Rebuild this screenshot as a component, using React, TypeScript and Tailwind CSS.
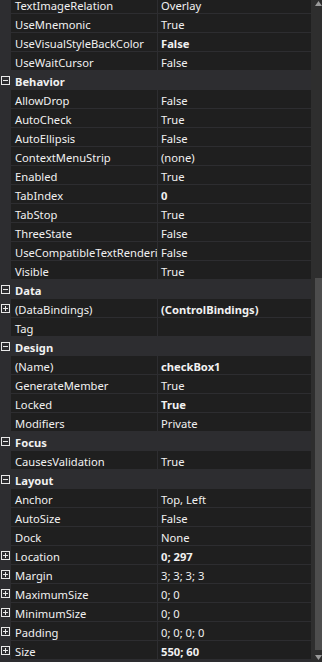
type Row =
  | { cat: string }
  | { name: string; value: string; bold?: boolean; plus?: boolean };

const rows: Row[] = [
  { name: "TextImageRelation", value: "Overlay" },
  { name: "UseMnemonic", value: "True" },
  { name: "UseVisualStyleBackColor", value: "False", bold: true },
  { name: "UseWaitCursor", value: "False" },
  { cat: "Behavior" },
  { name: "AllowDrop", value: "False" },
  { name: "AutoCheck", value: "True" },
  { name: "AutoEllipsis", value: "False" },
  { name: "ContextMenuStrip", value: "(none)" },
  { name: "Enabled", value: "True" },
  { name: "TabIndex", value: "0", bold: true },
  { name: "TabStop", value: "True" },
  { name: "ThreeState", value: "False" },
  { name: "UseCompatibleTextRendering", value: "False" },
  { name: "Visible", value: "True" },
  { cat: "Data" },
  { name: "(DataBindings)", value: "(ControlBindings)", bold: true, plus: true },
  { name: "Tag", value: "" },
  { cat: "Design" },
  { name: "(Name)", value: "checkBox1", bold: true },
  { name: "GenerateMember", value: "True" },
  { name: "Locked", value: "True", bold: true },
  { name: "Modifiers", value: "Private" },
  { cat: "Focus" },
  { name: "CausesValidation", value: "True" },
  { cat: "Layout" },
  { name: "Anchor", value: "Top, Left" },
  { name: "AutoSize", value: "False" },
  { name: "Dock", value: "None" },
  { name: "Location", value: "0; 297", bold: true, plus: true },
  { name: "Margin", value: "3; 3; 3; 3", plus: true },
  { name: "MaximumSize", value: "0; 0", plus: true },
  { name: "MinimumSize", value: "0; 0", plus: true },
  { name: "Padding", value: "0; 0; 0; 0", plus: true },
  { name: "Size", value: "550; 60", bold: true, plus: true },
];

function Expander({ open }: { open: boolean }) {
  return (
    <svg width="9" height="9" viewBox="0 0 9 9" className="shrink-0">
      <rect x="0.5" y="0.5" width="8" height="8" fill="none" stroke="#e8e8e8" />
      <line x1="2" y1="4.5" x2="7" y2="4.5" stroke="#e8e8e8" />
      {!open && <line x1="4.5" y1="2" x2="4.5" y2="7" stroke="#e8e8e8" />}
    </svg>
  );
}

export default function App() {
  return (
    <div className="w-[322px] h-[662px] overflow-hidden bg-[#2d2d30] flex font-['Noto_Sans',sans-serif] text-[11.2px] text-[#f1f1f1]">
      <div className="w-[311px] flex flex-col -mt-[5px]">
        {rows.map((r, i) =>
          "cat" in r ? (
            <div key={i} className="h-[19px] flex items-center bg-[#2d2d30]">
              <div className="w-[11px] flex items-center pl-[1px]">
                <Expander open />
              </div>
              <span className="pl-[4px] pt-[3px] font-bold leading-none">{r.cat}</span>
            </div>
          ) : (
            <div key={i} className="h-[19px] flex">
              <div className="w-[11px] flex items-center pl-[1px]">
                {r.plus && <Expander open={false} />}
              </div>
              <div className="w-[146px] h-[18px] bg-[#1f1f1f] flex items-center pl-[4px] pt-[3px] overflow-hidden whitespace-nowrap">
                <span className="leading-none">{r.name}</span>
              </div>
              <div className="w-[1px]" />
              <div
                className={`flex-1 h-[18px] bg-[#1f1f1f] flex items-center pl-[3px] pt-[3px] whitespace-nowrap ${
                  r.bold ? "font-bold" : ""
                }`}
              >
                <span className="leading-none">{r.value}</span>
              </div>
            </div>
          )
        )}
      </div>
      <div className="flex-1 flex flex-col bg-[#2e2e2e] pl-[4px]">
        <div className="h-[8px] flex items-start pt-[1px]">
          <svg width="7" height="5" viewBox="0 0 7 5">
            <polygon points="3.5,0 7,5 0,5" fill="#9a9a9a" />
          </svg>
        </div>
        <div className="h-[270px]" />
        <div className="flex-1 bg-[#4d4d4d]" />
        <div className="h-[12px] flex items-end pb-[2px]">
          <svg width="7" height="5" viewBox="0 0 7 5">
            <polygon points="0,0 7,0 3.5,5" fill="#9a9a9a" />
          </svg>
        </div>
      </div>
    </div>
  );
}
